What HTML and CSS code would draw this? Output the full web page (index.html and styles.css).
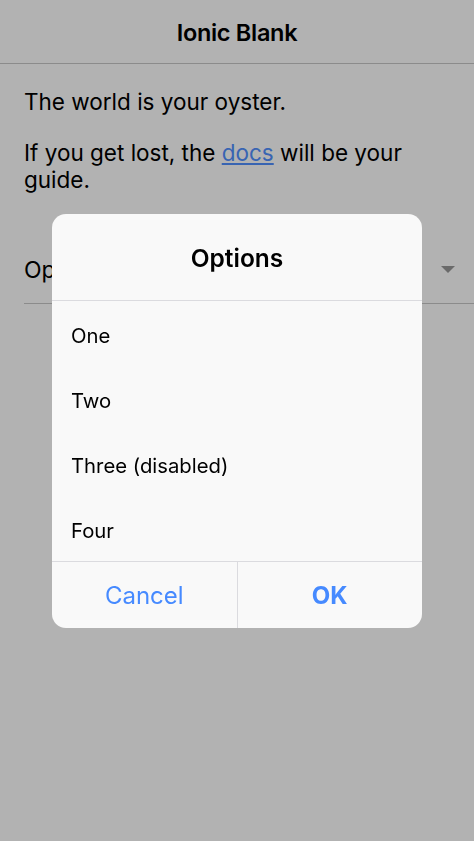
FILE: index.html
```html
<!DOCTYPE html>
<html>
<head>
<meta charset="utf-8">
<link rel="stylesheet" href="styles.css">
</head>
<body>
<div class="app">
  <header class="toolbar"><h1 class="title">Ionic Blank</h1></header>
  <main class="content">
    <p class="para">The world is your oyster.</p>
    <p class="para"><span>If you get lost, the</span> <a class="link" href="#">docs</a> <span>will be your</span> <span>guide.</span></p>
    <div class="select-row">
      <span class="select-label">Options</span>
      <span class="select-arrow"></span>
    </div>
  </main>
</div>
<div class="backdrop">
  <div class="alert">
    <div class="alert-head">Options</div>
    <div class="alert-list">
      <div class="alert-item">One</div>
      <div class="alert-item">Two</div>
      <div class="alert-item">Three (disabled)</div>
      <div class="alert-item">Four</div>
    </div>
    <div class="alert-buttons">
      <button class="alert-btn">Cancel</button>
      <button class="alert-btn strong">OK</button>
    </div>
  </div>
</div>
</body>
</html>
```
FILE: styles.css
```css
html, body {
  margin: 0;
  padding: 0;
  height: 100%;
}
body {
  font-family: "Inter", "Liberation Sans", sans-serif;
  background: #ffffff;
  color: #000;
}
.app {
  height: 100%;
}
.toolbar {
  height: 64px;
  border-bottom: 1px solid #c8c8c8;
  display: flex;
  align-items: center;
  justify-content: center;
  padding-top: 2px;
  box-sizing: border-box;
}
.title {
  margin: 0;
  font-size: 23.5px;
  font-weight: 600;
  letter-spacing: -0.3px;
}
.content {
  padding: 24px 0 0 24px;
}
.para {
  margin: 0 24px 24px 0;
  font-size: 22.5px;
  line-height: 27px;
}
.link {
  color: #5190ff;
  text-decoration: underline;
}
.select-row {
  margin-top: 47px;
  height: 64px;
  border-bottom: 1px solid #c8c8c8;
  display: flex;
  align-items: center;
  padding-right: 19px;
  padding-bottom: 4px;
  box-sizing: border-box;
}
.select-label {
  flex: 1;
  font-size: 23px;
}
.select-arrow {
  width: 0;
  height: 0;
  border-left: 7px solid transparent;
  border-right: 7px solid transparent;
  border-top: 7px solid #999;
}
.backdrop {
  position: fixed;
  inset: 0;
  background: rgba(0, 0, 0, 0.3);
  display: flex;
  align-items: center;
  justify-content: center;
}
.alert {
  width: 370px;
  background: #f9f9f9;
  border-radius: 14px;
  overflow: hidden;
  display: flex;
  flex-direction: column;
}
.alert-head {
  height: 87px;
  display: flex;
  align-items: center;
  justify-content: center;
  padding-top: 2px;
  box-sizing: border-box;
  font-size: 24.5px;
  font-weight: 600;
  border-bottom: 1px solid #dbdbdf;
}
.alert-list {
  display: flex;
  flex-direction: column;
}
.alert-item {
  height: 65px;
  display: flex;
  align-items: center;
  padding-left: 19px;
  padding-top: 4px;
  box-sizing: border-box;
  font-size: 20.3px;
}
.alert-buttons {
  display: flex;
  border-top: 1px solid #dbdbdf;
  height: 66px;
}
.alert-btn {
  flex: 1;
  border: 0;
  background: transparent;
  font-family: inherit;
  font-size: 24px;
  color: #468aff;
  padding: 2px 0 0 0;
}
.alert-btn + .alert-btn {
  border-left: 1px solid #dbdbdf;
}
.alert-btn.strong {
  font-weight: 700;
}
```
